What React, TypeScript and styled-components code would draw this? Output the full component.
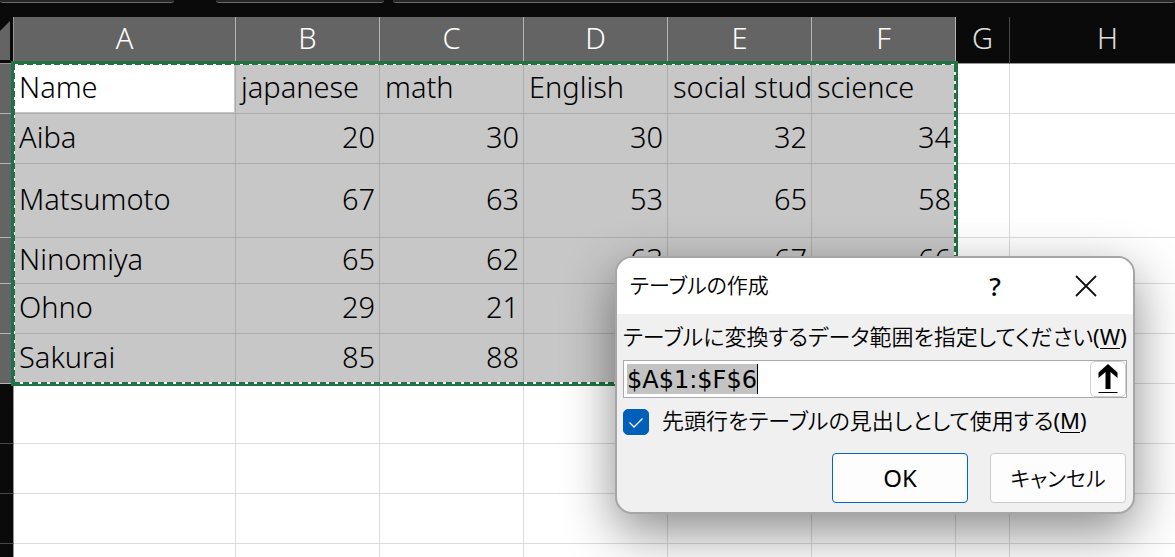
import React, { useState } from "react";
import styled, { createGlobalStyle, css } from "styled-components";

const GlobalStyle = createGlobalStyle`
  * { box-sizing: border-box; }
  html, body { margin: 0; background: #fff; }
`;

const sheetFont = `"Noto Sans", "Noto Sans CJK JP", sans-serif`;
const dialogFont = `"DejaVu Sans", "Noto Sans CJK JP", sans-serif`;

const Window = styled.main`
  position: relative;
  height: 100vh;
  overflow: hidden;
`;

const FormulaBar = styled.div`
  display: flex;
  height: 17px;
  background: #0a0a0a;
`;

const BarBox = styled.div<{ $width?: number; $gap: number }>`
  ${(p) => (p.$width ? `width: ${p.$width}px;` : "flex: 1;")}
  height: 3px;
  margin-left: ${(p) => p.$gap}px;
  background: #262626;
  border-bottom: 1px solid #6a6a6a;
  border-radius: 0 0 6px 6px;
`;

const SheetArea = styled.div`
  position: relative;
`;

const Sheet = styled.table`
  width: 100%;
  table-layout: fixed;
  border-collapse: separate;
  border-spacing: 0;
  font: 300 29px/40px ${sheetFont};
  color: #000;
`;

const Col = styled.col<{ $width?: number }>`
  ${(p) => p.$width && `width: ${p.$width}px;`}
`;

const Corner = styled.td`
  height: 47px;
  padding: 0;
  background: #0a0a0a;
  border-bottom: 1px solid #969696;
  border-right: 1px solid #969696;
  vertical-align: top;
  svg { display: block; }
`;

const ColumnHead = styled.th<{ $selected: boolean }>`
  height: 47px;
  padding: 0 0 4px;
  font-weight: 300;
  color: ${(p) => (p.$selected ? "#fff" : "#e0e0e0")};
  background: ${(p) => (p.$selected ? "#646464" : "#0a0a0a")};
  border-right: 1px solid ${(p) => (p.$selected ? "#b4b4b4" : "#484848")};
  border-bottom: 1px solid #969696;
`;

const HeadFiller = styled.td`
  padding: 0;
  background: #0a0a0a;
  border-bottom: 1px solid #969696;
`;

const Row = styled.tr<{ $height: number }>`
  height: ${(p) => p.$height}px;
`;

const RowHead = styled.th<{ $selected: boolean }>`
  padding: 0;
  background: ${(p) => (p.$selected ? "#646464" : "#0a0a0a")};
  border-bottom: 1px solid ${(p) => (p.$selected ? "#b4b4b4" : "#484848")};
  border-right: 1px solid #969696;
`;

const Cell = styled.td<{ $selected?: boolean; $active?: boolean; $numeric?: boolean }>`
  padding: 0 4px 4px 5px;
  overflow: hidden;
  white-space: nowrap;
  text-align: ${(p) => (p.$numeric ? "right" : "left")};
  border-right: 1px solid #dcdcdc;
  border-bottom: 1px solid #dcdcdc;
  ${(p) =>
    p.$selected &&
    css`
      background: #c7c7c7;
      border-color: #acacac;
    `}
  ${(p) =>
    p.$active &&
    css`
      background: #fff;
      box-shadow: inset -1px -1px #c7c7c7;
    `}
`;

const RowFiller = styled.td`
  padding: 0;
  border-bottom: 1px solid #dcdcdc;
`;

const Marquee = styled.div`
  position: absolute;
  left: 11px;
  top: 44px;
  width: 947px;
  height: 325px;
  border: 4px solid #217346;
  pointer-events: none;
`;

const dash = "#fff 0 3px, transparent 3px 9px";

const MarchingLine = styled.i<{ $side: "top" | "right" | "bottom" | "left" }>`
  position: absolute;
  ${(p) =>
    ({
      top: css`left: 0; right: 0; top: -1px; height: 1px; background: repeating-linear-gradient(90deg, ${dash});`,
      bottom: css`left: 5px; right: 0; bottom: -2px; height: 2px; background: repeating-linear-gradient(90deg, ${dash});`,
      left: css`top: 5px; bottom: 0; left: -1px; width: 1px; background: repeating-linear-gradient(180deg, ${dash});`,
      right: css`top: 7px; bottom: 0; right: -2px; width: 2px; background: repeating-linear-gradient(180deg, ${dash});`,
    })[p.$side]}
`;

const Dialog = styled.section`
  position: absolute;
  left: 615px;
  top: 256px;
  width: 520px;
  border: 2px solid #a6a6a6;
  border-radius: 17px;
  background: #f0f0f0;
  color: #000;
  font: 22px/32px ${dialogFont};
  font-feature-settings: "palt";
  box-shadow: 0 18px 52px rgba(0, 0, 0, 0.46);
`;

const TitleBar = styled.header`
  display: flex;
  align-items: center;
  height: 56px;
  padding: 0 13px;
  background: #fff;
  border-radius: 15px 15px 0 0;
`;

const Title = styled.h1`
  flex: 1;
  margin: 0;
  font-size: 21px;
  font-weight: 350;
  line-height: 32px;
`;

const IconButton = styled.button`
  display: grid;
  place-items: center;
  width: 68px;
  height: 40px;
  margin-left: 23px;
  padding: 0;
  border: 0;
  background: none;
  font: 500 26px/32px "Noto Sans", sans-serif;
  color: #000;
`;

const Form = styled.form`
  display: flex;
  flex-direction: column;
  padding: 8px 6px 9px;
`;

const FieldLabel = styled.label`
  height: 32px;
  white-space: nowrap;
  font-weight: 350;
`;

const Field = styled.div`
  display: flex;
  align-items: center;
  justify-content: space-between;
  height: 38px;
  margin-top: 6px;
  padding-left: 3px;
  border: 1px solid #a8a8ae;
  background: #fff;
`;

const RangeInput = styled.input`
  field-sizing: content;
  height: 30px;
  padding: 1px 0 0;
  border: 0;
  border-right: 1px solid #000;
  outline: 0;
  background: #c3c3c3;
  color: #000;
  font: 24px/29px ${dialogFont};
`;

const PickButton = styled.button`
  display: grid;
  place-items: center;
  width: 36px;
  height: 36px;
  padding: 0;
  border: 1px solid #d0d0d0;
  border-radius: 5px;
  background: #fdfdfd;
`;

const CheckRow = styled.label`
  display: flex;
  align-items: center;
  gap: 13px;
  height: 32px;
  margin-top: 8px;
  white-space: nowrap;
  font-weight: 350;
`;

const CheckBox = styled.span`
  display: grid;
  width: 26px;
  height: 26px;
  > * { grid-area: 1 / 1; }
  svg { pointer-events: none; }
  input:not(:checked) + svg { display: none; }
`;

const CheckInput = styled.input`
  appearance: none;
  width: 26px;
  height: 26px;
  margin: 0;
  border: 1px solid #005fb8;
  border-radius: 5px;
  &:checked { background: #005fb8; }
`;

const Actions = styled.footer`
  display: flex;
  justify-content: flex-end;
  gap: 22px;
  margin-top: 15px;
  padding-right: 1px;
`;

const Button = styled.button<{ $primary?: boolean }>`
  width: 136px;
  height: 50px;
  padding: 0;
  border: 1px solid ${(p) => (p.$primary ? "#0067c0" : "#cccccc")};
  border-radius: 4px;
  background: #fdfdfd;
  color: #000;
  font-family: "Noto Sans", "Noto Sans CJK JP", sans-serif;
  font-size: ${(p) => (p.$primary ? 24 : 21)}px;
  font-weight: ${(p) => (p.$primary ? 400 : 350)};
  line-height: 32px;
  font-feature-settings: "palt";
`;

const Accelerator = styled.span`
  font-family: "Noto Sans", sans-serif;
  font-weight: 400;
  line-height: 24px;
  u {
    display: inline-block;
    line-height: 26px;
    text-decoration: none;
    box-shadow: inset 0 -1px #000;
  }
`;

const columns = ["A", "B", "C", "D", "E", "F", "G", "H"];
const widths = [222, 144, 144, 144, 144, 144, 54, 196];
const selectedColumns = 6;

const rows: { height: number; values: (string | number)[] }[] = [
  { height: 50, values: ["Name", "japanese", "math", "English", "social studies", "science"] },
  { height: 50, values: ["Aiba", 20, 30, 30, 32, 34] },
  { height: 74, values: ["Matsumoto", 67, 63, 53, 65, 58] },
  { height: 46, values: ["Ninomiya", 65, 62, 63, 67, 66] },
  { height: 50, values: ["Ohno", 29, 21] },
  { height: 50, values: ["Sakurai", 85, 88] },
  { height: 60, values: [] },
  { height: 50, values: [] },
  { height: 50, values: [] },
  { height: 50, values: [] },
];

function Spreadsheet() {
  return (
    <SheetArea>
      <Sheet>
        <colgroup>
          <Col $width={14} />
          {widths.map((w, i) => (
            <Col key={i} $width={w} />
          ))}
          <Col />
        </colgroup>
        <thead>
          <tr>
            <Corner>
              <svg width="10" height="43" viewBox="0 0 10 43">
                <path d="M0 14 L10 4 V43 H0 Z" fill="#646464" />
              </svg>
            </Corner>
            {columns.map((c, i) => (
              <ColumnHead key={c} scope="col" $selected={i < selectedColumns}>
                {c}
              </ColumnHead>
            ))}
            <HeadFiller />
          </tr>
        </thead>
        <tbody>
          {rows.map((row, r) => {
            const filled = row.values.length > 0;
            return (
              <Row key={r} $height={row.height}>
                <RowHead $selected={filled} />
                {columns.map((c, i) => (
                  <Cell
                    key={c}
                    $selected={filled && i < selectedColumns}
                    $active={r === 0 && i === 0}
                    $numeric={typeof row.values[i] === "number"}
                  >
                    {row.values[i]}
                  </Cell>
                ))}
                <RowFiller />
              </Row>
            );
          })}
        </tbody>
      </Sheet>
      <Marquee>
        <MarchingLine $side="top" />
        <MarchingLine $side="right" />
        <MarchingLine $side="bottom" />
        <MarchingLine $side="left" />
      </Marquee>
    </SheetArea>
  );
}

function CreateTableDialog() {
  const [range, setRange] = useState("$A$1:$F$6");
  return (
    <Dialog role="dialog" aria-labelledby="dialog-title">
      <TitleBar>
        <Title id="dialog-title">テーブルの作成</Title>
        <IconButton type="button">?</IconButton>
        <IconButton type="button" aria-label="閉じる">
          <svg width="22" height="22" viewBox="0 0 22 22" stroke="#111" strokeWidth="1.8" fill="none">
            <path d="M1 1 L21 21 M21 1 L1 21" />
          </svg>
        </IconButton>
      </TitleBar>
      <Form onSubmit={(e) => e.preventDefault()}>
        <FieldLabel htmlFor="range">
          テーブルに変換するデータ範囲を指定してください
          <Accelerator>
            (<u>W</u>)
          </Accelerator>
        </FieldLabel>
        <Field>
          <RangeInput id="range" value={range} onChange={(e) => setRange(e.target.value)} />
          <PickButton type="button" aria-label="範囲を選択">
            <svg width="20" height="30" viewBox="0 0 20 30">
              <path d="M10 0 L19.5 8.5 V14 L12.5 8 V25 H7.5 V8 L0.5 14 V8.5 Z" fill="#000" />
              <path d="M0.5 28.5 H19.5" stroke="#000" />
            </svg>
          </PickButton>
        </Field>
        <CheckRow>
          <CheckBox>
            <CheckInput type="checkbox" defaultChecked />
            <svg width="26" height="26" viewBox="0 0 26 26" fill="none" stroke="#fff" strokeWidth="1.3">
              <path d="M6.5 13.5 L11 18 L19.5 9.5" />
            </svg>
          </CheckBox>
          <span>
            先頭行をテーブルの見出しとして使用する
            <Accelerator>
              (<u>M</u>)
            </Accelerator>
          </span>
        </CheckRow>
        <Actions>
          <Button type="submit" $primary>
            OK
          </Button>
          <Button type="button">キャンセル</Button>
        </Actions>
      </Form>
    </Dialog>
  );
}

export default function App() {
  return (
    <Window>
      <GlobalStyle />
      <FormulaBar>
        <BarBox $width={174} $gap={0} />
        <BarBox $width={168} $gap={42} />
        <BarBox $gap={9} />
      </FormulaBar>
      <Spreadsheet />
      <CreateTableDialog />
    </Window>
  );
}
